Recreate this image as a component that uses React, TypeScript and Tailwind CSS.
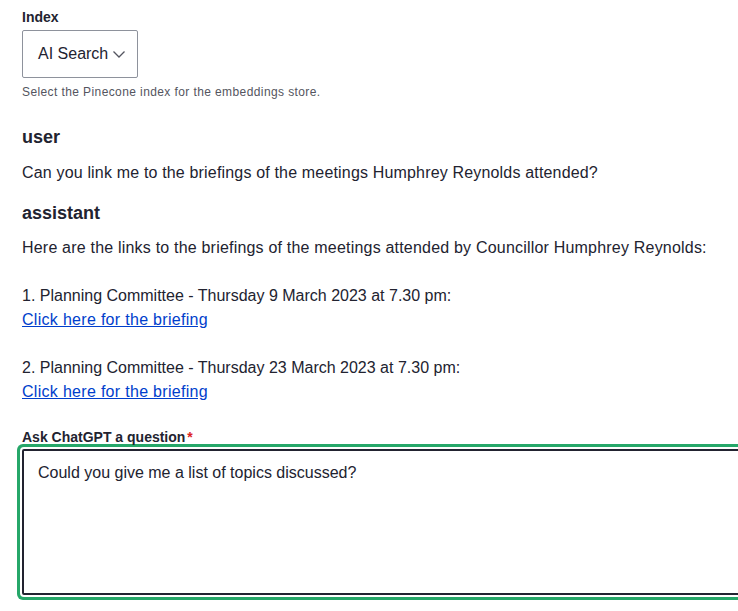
import React from 'react';

const font = { fontFamily: '"Liberation Sans", Arial, sans-serif' };

export default function App() {
  return (
    <div className="w-[738px] h-[611px] overflow-hidden bg-white text-[#222330]" style={font}>
      <div className="px-[22px]">
        {/* Index select */}
        <label className="block mt-[8px] text-sm font-bold leading-[18px]">Index</label>
        <div className="mt-1 flex items-center w-[116px] h-[48px] border border-[#8e929c] rounded-[2px] pl-[15px] pr-2">
          <span className="text-base leading-6">AI Search</span>
          <svg className="ml-[4px] w-[14px] h-[14px]" viewBox="0 0 14 14" fill="none" stroke="#545560" strokeWidth="1.3">
            <path d="M1.5 4.5 7 10l5.5-5.5" />
          </svg>
        </div>
        <p className="mt-[6px] text-xs leading-4 text-[#545560] tracking-[0.4px]">
          Select the Pinecone index for the embeddings store.
        </p>

        {/* Conversation */}
        <h3 className="mt-[25px] text-lg font-bold leading-6">user</h3>
        <p className="mt-3 text-base leading-6 tracking-[0.17px]">
          Can you link me to the briefings of the meetings Humphrey Reynolds attended?
        </p>

        <h3 className="mt-4 text-lg font-bold leading-6">assistant</h3>
        <div className="mt-[11px] text-base leading-6">
          <p className="tracking-[0.2px]">
            Here are the links to the briefings of the meetings attended by Councillor Humphrey Reynolds:
          </p>
          <br />
          <p>1. Planning Committee - Thursday 9 March 2023 at 7.30 pm:</p>
          <a href="#" className="text-[#003ecc] underline tracking-[0.3px]">Click here for the briefing</a>
          <br />
          <br />
          <p>2. Planning Committee - Thursday 23 March 2023 at 7.30 pm:</p>
          <a href="#" className="text-[#003ecc] underline tracking-[0.3px]">Click here for the briefing</a>
        </div>

        {/* Question */}
        <label className="block mt-[24px] text-sm font-bold leading-[18px]">
          Ask ChatGPT a question<span className="text-[#dc2323] ml-[2px]">*</span>
        </label>
        <div className="mt-[3px] w-[760px] h-[146px] border-2 border-[#222330] rounded-[2px] bg-white pl-[14px] pt-[10px] shadow-[0_0_0_2px_#fff,0_0_0_5px_#26a769]">
          <span className="text-base leading-6">Could you give me a list of topics discussed?</span>
        </div>
      </div>
    </div>
  );
}
